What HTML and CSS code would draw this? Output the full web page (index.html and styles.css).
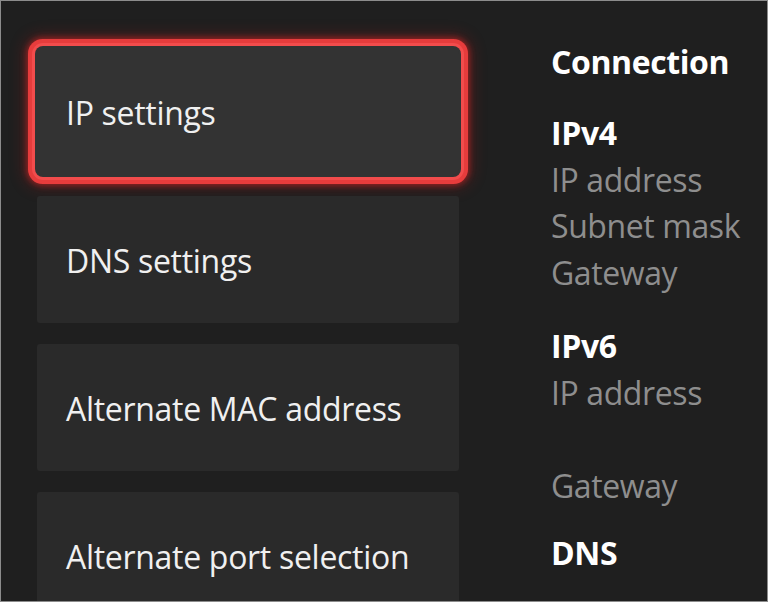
FILE: index.html
```html
<!DOCTYPE html>
<html>
<head>
<meta charset="utf-8">
<link rel="stylesheet" href="styles.css">
</head>
<body>
<div class="frame">
  <div class="menu">
    <div class="card focused"><span>IP settings</span></div>
    <div class="card"><span>DNS settings</span></div>
    <div class="card"><span>Alternate MAC address</span></div>
    <div class="card"><span>Alternate port selection</span></div>
  </div>
  <div class="info">
    <div class="title">Connection</div>
    <div class="group g1">
      <div class="head">IPv4</div>
      <div class="item">IP address</div>
      <div class="item">Subnet mask</div>
      <div class="item">Gateway</div>
    </div>
    <div class="group g2">
      <div class="head">IPv6</div>
      <div class="item">IP address</div>
      <div class="item blank"></div>
      <div class="item">Gateway</div>
    </div>
    <div class="group g3">
      <div class="head">DNS</div>
    </div>
  </div>
</div>
</body>
</html>
```
FILE: styles.css
```css
html, body {
  margin: 0;
  padding: 0;
  background: #1e1e1e;
}
.frame {
  width: 768px;
  height: 602px;
  box-sizing: border-box;
  border: 1px solid #8c8c8c;
  background: #1f1f1f;
  overflow: hidden;
  display: flex;
  font-family: "Open Sans", "Noto Sans", sans-serif;
}
.menu {
  display: flex;
  flex-direction: column;
  gap: 21px;
  padding: 47px 0 0 36px;
  flex: none;
}
.card {
  width: 422px;
  height: 127px;
  flex: none;
  box-sizing: border-box;
  background: #2a2a2a;
  border-radius: 3px;
  display: flex;
  align-items: center;
  padding-left: 29px;
  color: #f0f0f0;
  font-size: 32px;
  letter-spacing: -0.3px;
}
.card span {
  margin-top: 2px;
}
.card.focused {
  background: #333333;
  border-radius: 6px;
  box-shadow:
    0 0 0 2px #333333,
    0 0 0 5px #f24c4c,
    0 0 0 9px #e63c3c,
    0 0 6px 10px rgba(220, 40, 40, 0.6),
    0 0 16px 12px rgba(190, 25, 25, 0.3);
}
.info {
  padding: 38px 0 0 92px;
  display: flex;
  flex-direction: column;
  font-size: 32px;
  line-height: 46.5px;
  letter-spacing: -0.4px;
}
.g1 { margin-top: 24.5px; }
.g2 { margin-top: 27px; }
.g3 { margin-top: 21px; }
.title, .head {
  color: #ffffff;
  font-weight: 700;
}
.item {
  color: #8e8e8e;
}
.blank {
  height: 46.5px;
}
```
